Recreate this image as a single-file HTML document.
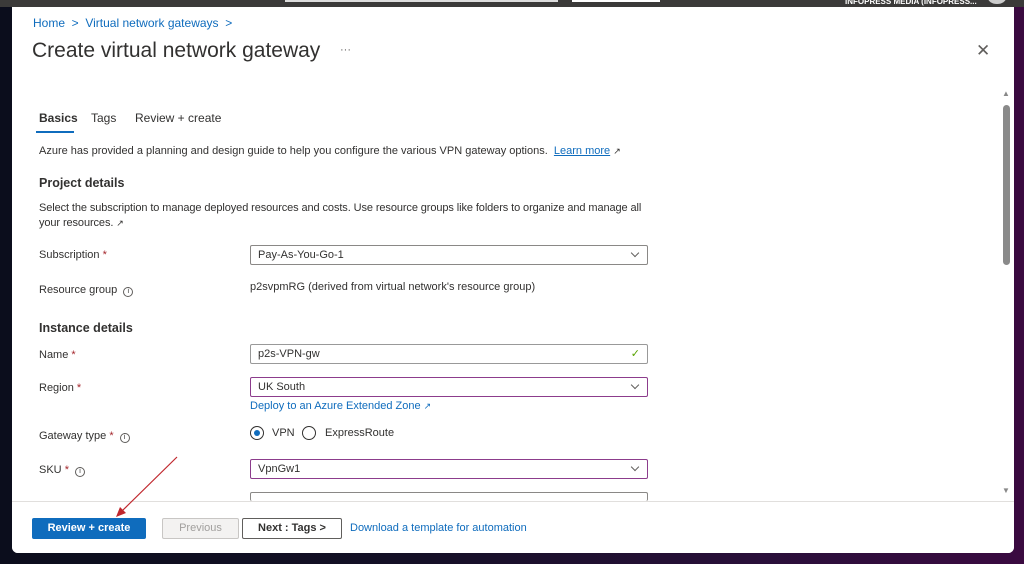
<!DOCTYPE html>
<html><head><meta charset="utf-8"><style>
*{margin:0;padding:0;box-sizing:border-box}
body{width:1024px;height:564px;overflow:hidden;background:linear-gradient(90deg,#0b0d1c 0%,#141026 40%,#2a0f3a 75%,#3a0a40 100%);font-family:"Liberation Sans",sans-serif;color:#323130;position:relative}
.top{position:absolute;left:0;top:0;width:1024px;height:7px;background:#3b3a39}
.panel{position:absolute;left:12px;top:7px;width:1002px;height:546px;background:#fff;border-radius:0 0 6px 6px}
.a{position:absolute;white-space:nowrap}
.s{font-size:11px}
.lnk{color:#0f6cbd}
.h{font-size:12.5px;font-weight:bold;color:#323130}
.box{position:absolute;left:250px;width:398px;height:20px;border:1px solid #8a8886;border-radius:2px;font-size:11px;padding:3px 7px}
.box.p{border-color:#8c3c8c}
.chev{position:absolute;right:9px;top:4px;width:6px;height:6px;border-right:1px solid #605e5c;border-bottom:1px solid #605e5c;transform:rotate(45deg)}
.req{color:#a4262c}
.info{display:inline-block;width:10px;height:10px;border:1px solid #605e5c;border-radius:50%;font-size:7px;text-align:center;line-height:8px;margin-left:6px;vertical-align:0}
.btn{position:absolute;top:518px;height:21px;font-size:11px;text-align:center;line-height:21px;border-radius:2px}
</style></head><body>
<div class="top"></div>
<div style="position:absolute;left:285px;top:0;width:273px;height:2px;background:#ddd"></div>
<div style="position:absolute;left:572px;top:0;width:88px;height:2px;background:#fff"></div>
<div class="a" style="left:845px;top:-3px;font-size:8px;color:#fff;font-weight:bold">INFOPRESS MEDIA (INFOPRESS...</div>
<div style="position:absolute;left:988px;top:-8px;width:18px;height:12px;border-radius:50%;background:#ccc"></div>
<div class="panel"></div>
<div class="a s lnk" style="left:33px;top:16px;font-size:12px">Home &nbsp;&gt;&nbsp; Virtual network gateways &nbsp;&gt;</div>
<div class="a" style="left:32px;top:39px;font-size:21px;color:#323130">Create virtual network gateway</div>
<div class="a" style="left:340px;top:44px;font-size:11px;color:#605e5c">···</div>
<div class="a" style="left:976px;top:41px;font-size:17px;color:#605e5c">✕</div>
<div style="position:absolute;left:1003px;top:105px;width:7px;height:160px;background:#8a8a8a;border-radius:4px"></div>
<div class="a" style="left:1002px;top:89px;font-size:8px;color:#888">▲</div>
<div class="a" style="left:1002px;top:486px;font-size:8px;color:#888">▼</div>

<div class="a" style="left:39px;top:111px;font-size:12px;font-weight:bold">Basics</div>
<div style="position:absolute;left:36px;top:131px;width:38px;height:2px;background:#0f6cbd"></div>
<div class="a" style="left:91px;top:111px;font-size:12px">Tags</div>
<div class="a" style="left:135px;top:111px;font-size:12px">Review + create</div>
<div class="a s" style="left:39px;top:145px">Azure has provided a planning and design guide to help you configure the various VPN gateway options. &nbsp;<span class="lnk" style="text-decoration:underline">Learn more</span> <span style="font-size:9px">↗</span></div>
<div class="a h" style="left:39px;top:176px">Project details</div>
<div class="a s" style="left:39px;top:201px;line-height:15px;letter-spacing:-0.1px">Select the subscription to manage deployed resources and costs. Use resource groups like folders to organize and manage all<br>your resources. <span style="font-size:9px">↗</span></div>
<div class="a s" style="left:39px;top:249px">Subscription <span class="req">*</span></div>
<div class="box" style="top:245px">Pay-As-You-Go-1<div class="chev"></div></div>
<div class="a s" style="left:39px;top:284px">Resource group<span class="info">i</span></div>
<div class="a s" style="left:250px;top:281px">p2svpmRG (derived from virtual network's resource group)</div>
<div class="a h" style="left:39px;top:321px">Instance details</div>
<div class="a s" style="left:39px;top:349px">Name <span class="req">*</span></div>
<div class="box" style="top:344px;border-color:#999">p2s-VPN-gw<span style="position:absolute;right:7px;top:2px;color:#57a300">✓</span></div>
<div class="a s" style="left:39px;top:382px">Region <span class="req">*</span></div>
<div class="box p" style="top:377px">UK South<div class="chev"></div></div>
<div class="a s lnk" style="left:250px;top:400px">Deploy to an Azure Extended Zone <span style="font-size:9px">↗</span></div>
<div class="a s" style="left:39px;top:430px">Gateway type <span class="req">*</span><span class="info">i</span></div>
<div style="position:absolute;left:250px;top:426px;width:14px;height:14px;border:1px solid #323130;border-radius:50%"><div style="margin:3px;width:6px;height:6px;border-radius:50%;background:#0f6cbd"></div></div>
<div class="a s" style="left:272px;top:427px">VPN</div>
<div style="position:absolute;left:302px;top:426px;width:14px;height:14px;border:1px solid #323130;border-radius:50%"></div>
<div class="a s" style="left:325px;top:427px">ExpressRoute</div>
<div class="a s" style="left:39px;top:464px">SKU <span class="req">*</span><span class="info">i</span></div>
<div class="box p" style="top:459px">VpnGw1<div class="chev"></div></div>
<div class="box" style="top:492px;height:9px;border-bottom:none"></div>
<div style="position:absolute;left:12px;top:501px;width:1002px;height:52px;background:#fff;border-top:1px solid #e1dfdd;border-radius:0 0 6px 6px"></div>
<div class="btn" style="left:32px;width:114px;background:#0f6cbd;color:#fff;font-weight:bold">Review + create</div>
<div class="btn" style="left:162px;width:77px;background:#f3f2f1;border:1px solid #c8c6c4;color:#a19f9d;line-height:19px">Previous</div>
<div class="btn" style="left:242px;width:100px;background:#fff;border:1px solid #605e5c;font-weight:bold;line-height:19px">Next : Tags &gt;</div>
<div class="a s lnk" style="left:350px;top:522px">Download a template for automation</div>
<svg style="position:absolute;left:110px;top:455px" width="70" height="65"><line x1="67" y1="2" x2="12" y2="56" stroke="#c0272d" stroke-width="1.2"/><polygon points="6,62 10,52 16,58" fill="#c0272d"/></svg>
</body></html>
